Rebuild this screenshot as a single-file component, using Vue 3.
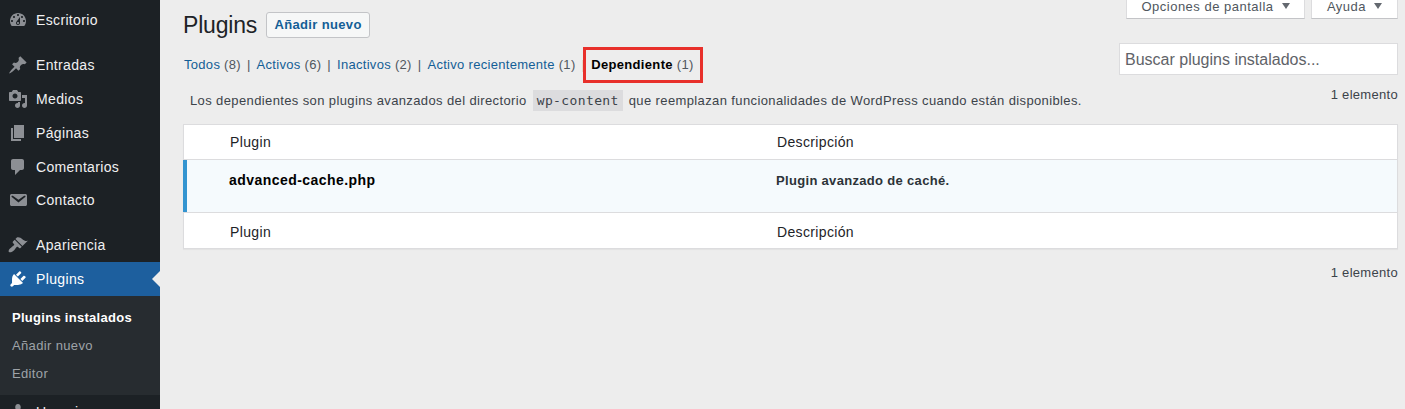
<script setup>
const menu = [
  { label: 'Escritorio', d: 'M3.76 16h12.48c1.1-1.37 1.76-3.11 1.76-5 0-4.42-3.58-8-8-8s-8 3.58-8 8c0 1.89.66 3.63 1.76 5zM10 4c.55 0 1 .45 1 1s-.45 1-1 1-1-.45-1-1 .45-1 1-1zM6 6c.55 0 1 .45 1 1s-.45 1-1 1-1-.45-1-1 .45-1 1-1zm8 0c.55 0 1 .45 1 1s-.45 1-1 1-1-.45-1-1 .45-1 1-1zm-5.37 5.55L12 7v6c0 1.1-.9 2-2 2s-2-.9-2-2c0-.57.24-1.08.63-1.45zM4 10c.55 0 1 .45 1 1s-.45 1-1 1-1-.45-1-1 .45-1 1-1zm12 0c.55 0 1 .45 1 1s-.45 1-1 1-1-.45-1-1 .45-1 1-1zm-5 3c0-.55-.45-1-1-1s-1 .45-1 1 .45 1 1 1 1-.45 1-1z', cls: 'first' },
  { label: 'Entradas', d: 'M10.44 3.02l1.82-1.82 6.36 6.35-1.83 1.82c-1.05-.68-2.48-.57-3.41.36l-.75.75c-.92.93-1.04 2.35-.35 3.41l-1.83 1.82-2.41-2.41-2.8 2.79c-.42.42-3.38 2.71-3.8 2.29s1.86-3.39 2.28-3.81l2.79-2.79L4.1 9.36l1.83-1.82c1.05.69 2.48.57 3.4-.36l.75-.75c.93-.92 1.05-2.35.36-3.41z', cls: 'gap' },
  { label: 'Medios', d: 'M13 11V4c0-.55-.45-1-1-1h-1.67L9 1H5L3.67 3H2c-.55 0-1 .45-1 1v7c0 .55.45 1 1 1h10c.55 0 1-.45 1-1zM7 4.5c1.38 0 2.5 1.12 2.5 2.5S8.38 9.5 7 9.5 4.5 8.38 4.5 7 5.62 4.5 7 4.5zM14 6h5v10.5c0 1.38-1.12 2.5-2.5 2.5S14 17.88 14 16.5s1.12-2.5 2.5-2.5c.17 0 .34.02.5.05V9h-3V6zm-4 8.05V13h2v3.5c0 1.38-1.12 2.5-2.5 2.5S7 17.88 7 16.5 8.12 14 9.5 14c.17 0 .34.02.5.05z' },
  { label: 'Páginas', d: 'M6 15V2h10v13H6zm-1 1h8v2H3V5h2v11z' },
  { label: 'Comentarios', d: 'M5 2h9c1.1 0 2 .9 2 2v7c0 1.1-.9 2-2 2h-2l-5 5v-5H5c-1.1 0-2-.9-2-2V4c0-1.1.9-2 2-2z', cls: 'tight' },
  { label: 'Contacto', d: 'M3.87 4h13.25C18.37 4 19 4.59 19 5.79v8.42c0 1.19-.63 1.79-1.88 1.79H3.87c-1.25 0-1.88-.6-1.88-1.79V5.79c0-1.2.63-1.79 1.88-1.79zm6.62 8.6l6.74-5.53c.24-.2.43-.66.13-1.07-.29-.41-.82-.42-1.17-.17l-5.7 3.86L4.8 5.83c-.35-.25-.88-.24-1.17.17-.3.41-.11.87.13 1.07z' },
  { label: 'Apariencia', d: 'M14.48 11.06L7.41 3.99l1.5-1.5c.5-.56 2.3-.47 3.51.32 1.21.8 1.43 1.28 2.91 2.1 1.18.64 2.45 1.26 4.45.85zm-.71.71L6.7 4.7 4.93 6.47c-.39.39-.39 1.02 0 1.41l1.06 1.06c.39.39.39 1.03 0 1.42-.6.6-1.43 1.11-2.21 1.69-.35.26-.7.53-1.01.84C1.43 13.26 0 16 1 17s3.74-.42 5.12-1.8c.3-.31.58-.66.84-1.01.58-.78 1.09-1.61 1.69-2.21.39-.39 1.02-.39 1.41 0l1.06 1.06c.39.39 1.02.39 1.41 0z', cls: 'gap' },
  { label: 'Plugins', d: 'M13.11 4.36L9.87 7.6 8 5.73l3.24-3.24c.35-.34 1.05-.2 1.56.32.52.51.66 1.21.31 1.55zm-8 1.77l.91-1.12 9.01 9.01-1.19.84c-.71.71-2.63 1.16-3.82 1.16H6.14L4.9 17.26c-.59.59-1.54.59-2.12 0-.59-.58-.59-1.53 0-2.12l1.24-1.24v-3.88c0-1.13.4-3.19 1.09-3.89zm7.26 3.97l3.24-3.24c.34-.35 1.04-.21 1.55.31.52.51.66 1.21.31 1.55l-3.24 3.25z', cls: 'current' }
]
const filters = [
  { label: 'Todos', n: 8 },
  { label: 'Activos', n: 6 },
  { label: 'Inactivos', n: 2 },
  { label: 'Activo recientemente', n: 1 }
]
const usersIcon = 'M10 9.25c-2.27 0-2.73-3.44-2.73-3.44C7 4.02 7.82 2 9.97 2c2.16 0 2.98 2.02 2.71 3.81 0 0-.41 3.44-2.68 3.44zm0 2.57L12.72 10c2.39 0 4.52 2.33 4.52 4.53v2.49s-3.65 1.13-7.24 1.13c-3.65 0-7.24-1.13-7.24-1.13v-2.49c0-2.25 1.94-4.48 4.47-4.48z'
</script>

<template>
  <div class="page">
    <aside class="side">
      <a v-for="m in menu" :key="m.label" class="item" :class="m.cls">
        <svg class="ico" viewBox="0 0 20 20"><path :d="m.d" /></svg>
        <span>{{ m.label }}</span>
      </a>
      <div class="sub">
        <a class="on">Plugins instalados</a>
        <a>Añadir nuevo</a>
        <a>Editor</a>
      </div>
      <a class="item">
        <svg class="ico" viewBox="0 0 20 20"><path :d="usersIcon" /></svg>
        <span>Usuarios</span>
      </a>
    </aside>

    <main class="main">
      <div class="top">
        <div>
          <div class="heading">
            <h1>Plugins</h1>
            <a class="add">Añadir nuevo</a>
          </div>
          <ul class="filters">
            <li v-for="f in filters" :key="f.label">
              <a>{{ f.label }}</a> ({{ f.n }})<i>|</i>
            </li>
            <li class="current"><b>Dependiente</b> (1)</li>
          </ul>
        </div>
        <div class="right">
          <div class="tabs">
            <button>Opciones de pantalla<span class="tri"></span></button>
            <button>Ayuda<span class="tri"></span></button>
          </div>
          <input class="search" placeholder="Buscar plugins instalados..." />
        </div>
      </div>

      <div class="noterow">
        <p>Los dependientes son plugins avanzados del directorio <code>wp-content</code> que reemplazan funcionalidades de WordPress cuando están disponibles.</p>
        <span class="count">1 elemento</span>
      </div>

      <div class="table">
        <div class="row head"><div>Plugin</div><div>Descripción</div></div>
        <div class="row body"><div><b>advanced-cache.php</b></div><div><b class="desc">Plugin avanzado de caché.</b></div></div>
        <div class="row foot"><div>Plugin</div><div>Descripción</div></div>
      </div>

      <div class="bottom"><span class="count">1 elemento</span></div>
    </main>
  </div>
</template>

<style>
html, body { margin: 0; background: #ededed; overflow: hidden; }
</style>

<style scoped>
.page {
  display: flex;
  height: 409px;
  overflow: hidden;
  font-family: "Liberation Sans", Arial, sans-serif;
  font-size: 13px;
  letter-spacing: .35px;
  color: #3c434a;
  background: #ededed;
}
.side {
  flex: 0 0 160px;
  width: 160px;
  background: #1c2125;
  padding-top: 3px;
}
.item {
  display: flex;
  align-items: center;
  height: 34px;
  color: #f0f0f1;
  font-size: 14px;
  position: relative;
}
.item.gap { margin-top: 11px; }
.item.tight { height: 33px; }
.item > span { margin-left: 8px; }
.ico { width: 20px; height: 20px; margin-left: 8px; fill: #8c8f94; flex: none; }
.item.current { background: #1d5f9e; color: #fff; }
.item.current .ico { fill: #fff; }
.item.current::after {
  content: "";
  position: absolute;
  right: 0;
  top: 50%;
  margin-top: -8px;
  border: 8px solid transparent;
  border-right-color: #ededed;
  border-left-width: 0;
}
.sub {
  display: flex;
  flex-direction: column;
  background: #272c30;
  padding: 8px 0 7px;
  font-size: 13px;
  color: #9ea3a8;
}
.sub a { height: 28px; line-height: 28px; padding-left: 12px; }
.sub .on { color: #fff; font-weight: 700; letter-spacing: .28px; }

.main { flex: 1; min-width: 0; padding: 0 7px 0 23px; }
.top { display: flex; justify-content: space-between; }
.heading { display: flex; align-items: center; padding-top: 12px; height: 26px; }
h1 { margin: 0; font-size: 23px; font-weight: 400; color: #1d2327; line-height: 28px; letter-spacing: -.2px; }
.add {
  margin-left: 9px;
  width: 102px;
  height: 24px;
  line-height: 24px;
  border: 1px solid #c3c4c7;
  background: #f6f7f7;
  border-radius: 3px;
  text-align: center;
  color: #135e96;
  font-weight: 700;
  font-size: 13px;
}
.filters { display: flex; list-style: none; margin: 8px 0 0 1px; padding: 0; height: 36px; align-items: center; color: #50575e; letter-spacing: .3px; }
.filters li { white-space: pre; }
.filters a { color: #135e96; }
.filters i { font-style: normal; margin: 0 6px; color: #50575e; }
.filters li:nth-child(4) i { margin-right: -2px; color: #b9bbbd; }
.filters .current {
  height: 30px;
  line-height: 30px;
  border: 3px solid #e8302b;
  margin-top: 1px;
  padding: 0 6px 0 5px;
  color: #50575e;
}
.filters .current b { color: #000; letter-spacing: .33px; }
.right { display: flex; flex-direction: column; align-items: flex-end; }
.tabs { display: flex; gap: 6px; height: 19px; }
.tabs button {
  display: flex;
  align-items: center;
  justify-content: center;
  height: 19px;
  margin: 0;
  padding: 0 0 6px;
  background: #fff;
  border: 0;
  border-bottom: 1px solid #c3c4c7;
  border-left: 1px solid #dcdcde;
  border-right: 1px solid #dcdcde;
  box-sizing: border-box;
  font: 13px "Liberation Sans", Arial, sans-serif;
  letter-spacing: .5px;
  color: #50575e;
  overflow: hidden;
}
.tabs button:first-child { width: 179px; }
.tabs button:last-child { width: 87px; }
.tri {
  margin-left: 8px;
  border: 4.5px solid transparent;
  border-top: 6px solid #646970;
  border-bottom: 0;
}
.search {
  box-sizing: border-box;
  width: 279px;
  height: 32px;
  margin-top: 24px;
  border: 1px solid #dcdcde;
  padding: 2px 5px 0;
  background: #fff;
  font: 16px "Liberation Sans", Arial, sans-serif;
  letter-spacing: 0;
  color: #50575e;
  outline: none;
}
.search::placeholder { color: #5f6368; opacity: 1; }

.noterow { display: flex; justify-content: space-between; align-items: flex-start; margin-top: 8px; height: 34px; }
.noterow p { margin: 0; padding-left: 7px; line-height: 21px; color: #3c434a; letter-spacing: .38px; }
code {
  display: inline-block;
  font-family: "DejaVu Sans Mono", "Liberation Mono", monospace;
  font-size: 13px;
  background: #dcdcde;
  padding: 0 4px;
  margin: 0 2px;
  line-height: 21px;
  color: #3c434a;
}
.count { font-size: 13px; color: #3c434a; line-height: 16px; letter-spacing: .3px; }
.noterow .count { margin-top: -3px; }

.table {
  background: #fff;
  border: 1px solid #dcdcde;
  box-shadow: 0 1px 1px rgba(0,0,0,.04);
}
.row { display: grid; grid-template-columns: 593px 1fr; }
.row > div { padding-left: 46px; font-size: 14px; color: #1d2327; }
.row > div + div { padding-left: 0; }
.head { height: 34px; line-height: 34px; border-bottom: 1px solid #dcdcde; }
.foot { height: 35px; line-height: 38px; border-top: 1px solid #dcdcde; }
.body {
  height: 52px;
  margin-left: -1px;
  background: #f5fafd;
  box-shadow: inset 4px 0 0 #3394d0;
  line-height: 40px;
}
.body > div b { color: #000; letter-spacing: .45px; }
.body > div b.desc { font-size: 13px; color: #2c3338; letter-spacing: .32px; }
.bottom { display: flex; justify-content: flex-end; margin-top: 16px; }
</style>
